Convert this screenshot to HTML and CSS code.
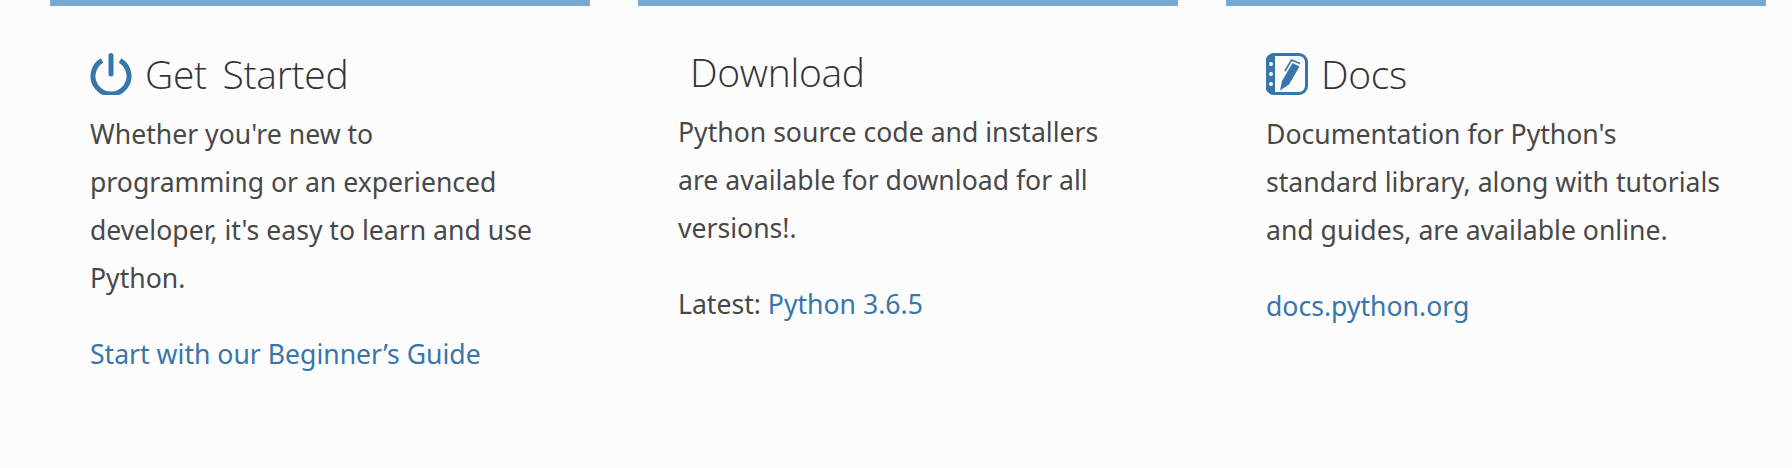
FILE: index.html
```html
<!DOCTYPE html>
<html lang="en">
<head>
<meta charset="utf-8">
<title>Python</title>
<link rel="stylesheet" href="styles.css">
</head>
<body>
<main class="cols">
  <section class="col">
    <h2 class="head"><svg class="ico" viewBox="0 0 42 42"><path d="M12 7.5A18 18 0 1 0 30 7.5" fill="none" stroke="#3776ab" stroke-width="5"/><path d="M21 2.5V21" fill="none" stroke="#3776ab" stroke-width="5" stroke-linecap="round"/></svg>Get Started</h2>
    <p class="txt">Whether you're new to programming or an experienced developer, it's easy to learn and use Python.</p>
    <p class="txt"><a href="#">Start with our Beginner’s Guide</a></p>
  </section>
  <section class="col col-b">
    <h2 class="head head-b">Download</h2>
    <p class="txt">Python source code and installers are available for download for all versions!.</p>
    <p class="txt">Latest: <a href="#">Python 3.6.5</a></p>
  </section>
  <section class="col">
    <h2 class="head"><svg class="ico" viewBox="0 0 42 42"><path d="M8 1.5H33A7.5 7.5 0 0 1 40.5 9V33A7.5 7.5 0 0 1 33 40.5H8A7 7 0 0 1 1 33V9A7 7 0 0 1 8 1.5Z" fill="#fcfcfc" stroke="#3776ab" stroke-width="3"/><path d="M8 1.5A7 7 0 0 0 1 9V33A7 7 0 0 0 8 40.5H9V1.5Z" fill="#3776ab"/><circle cx="5" cy="11" r="2" fill="#fcfcfc"/><circle cx="5" cy="21" r="2" fill="#fcfcfc"/><circle cx="5" cy="31" r="2" fill="#fcfcfc"/><path d="M14 37.5L16 28L26.5 10L33.5 13.5L23 31.5Z" fill="#3776ab"/><path d="M19 18L25.5 7L34 10.5" fill="none" stroke="#3776ab" stroke-width="1.6"/></svg>Docs</h2>
    <p class="txt">Documentation for Python's standard library, along with tutorials and guides, are available online.</p>
    <p class="txt"><a href="#">docs.python.org</a></p>
  </section>
</main>
</body>
</html>
```
FILE: styles.css
```css
html, body { margin: 0; padding: 0; }
body {
  height: 468px;
  overflow: hidden;
  background: #fcfcfc;
  color: #484848;
  font-family: "Noto Sans", "Open Sans", sans-serif;
}
.cols {
  display: flex;
  gap: 48px;
  padding: 0 26px 0 50px;
}
.col {
  width: 540px;
  box-sizing: border-box;
  border-top: 6px solid #77a9d2;
  padding: 44px 40px 0;
}
.col-b { padding-top: 42px; }
.head {
  display: flex;
  align-items: center;
  gap: 13px;
  height: 48px;
  margin: 0 0 12px;
  font-family: "Open Sans", sans-serif;
  font-weight: 300;
  font-size: 39px;
  line-height: 48px;
  letter-spacing: -0.3px;
  word-spacing: 6px;
  color: #333;
}
.head-b { padding-left: 12px; }
.ico { width: 42px; height: 42px; flex: none; }
.txt {
  margin: 0 0 28px;
  font-size: 26.6px;
  line-height: 48px;
}
.txt a { color: #3776ab; text-decoration: none; }
```
